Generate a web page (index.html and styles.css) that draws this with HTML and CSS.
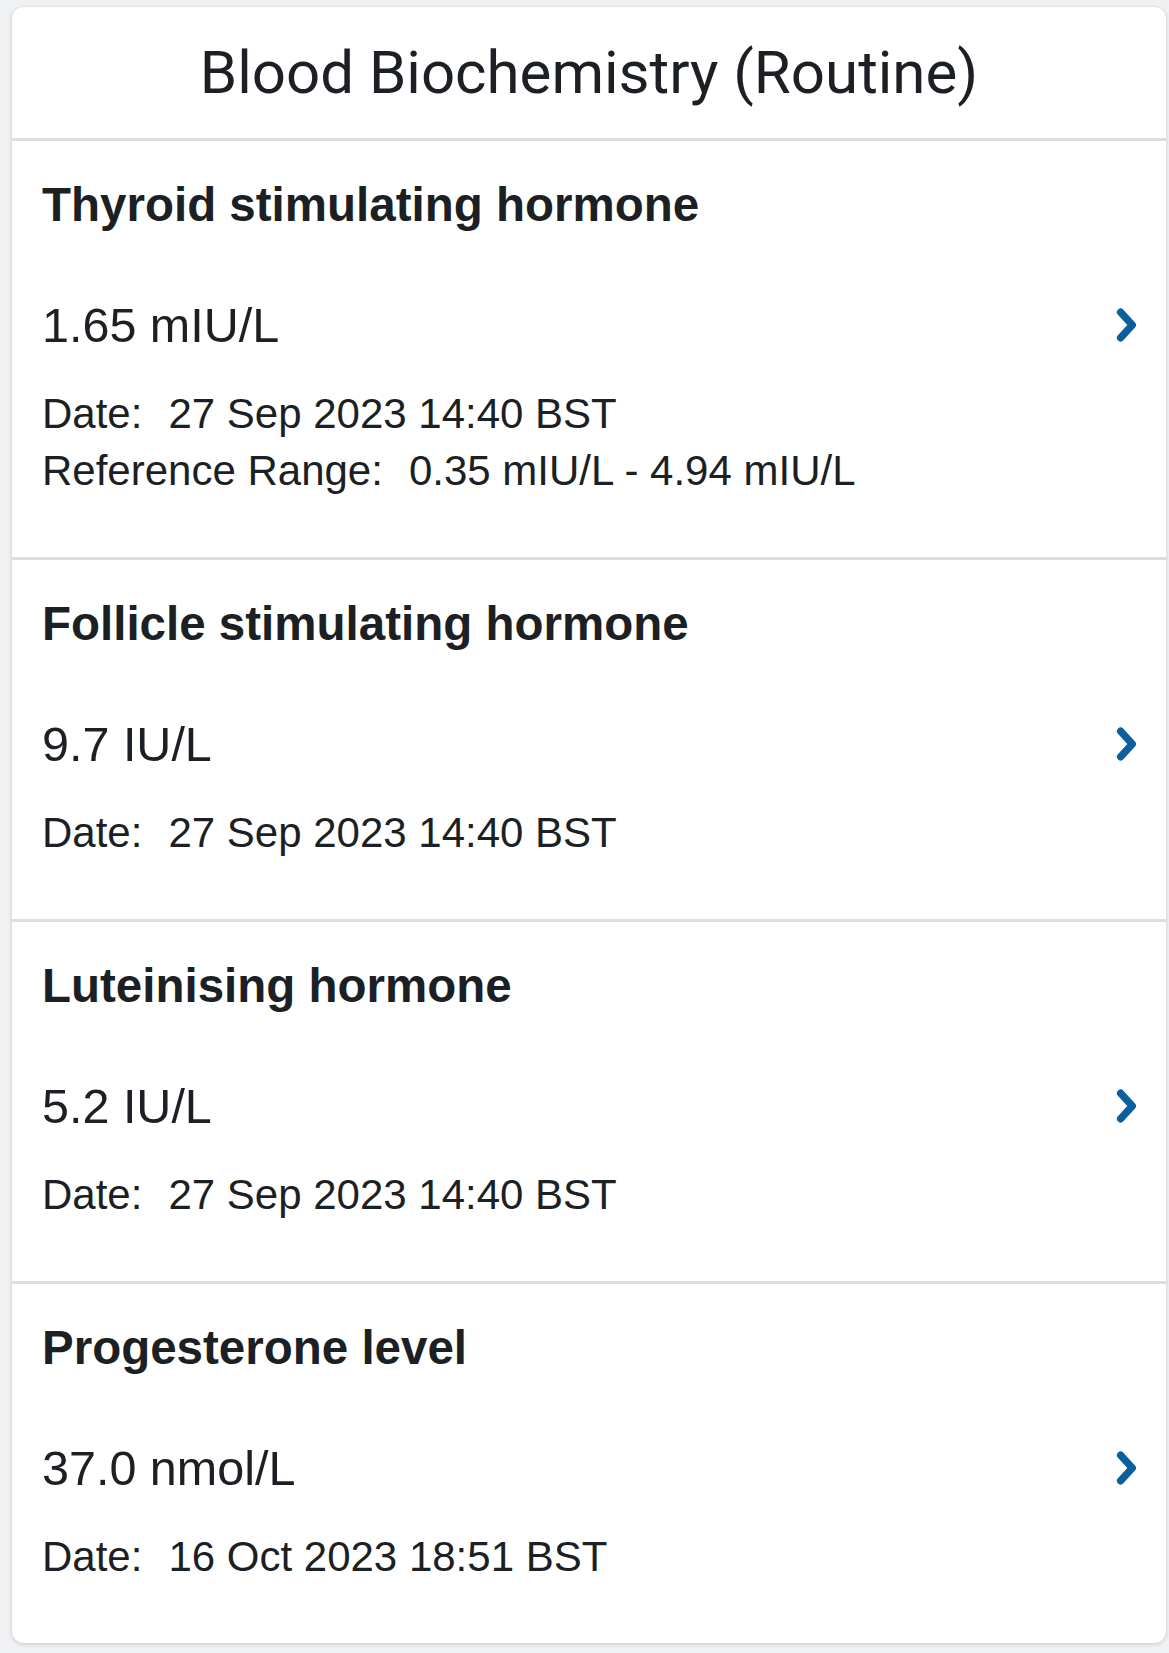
FILE: index.html
```html
<!DOCTYPE html>
<html lang="en">
<head>
  <meta charset="UTF-8">
  <meta name="viewport" content="width=device-width, initial-scale=1.0">
  <title>Blood Biochemistry (Routine)</title>
  <link rel="stylesheet" href="styles.css">
</head>
<body>
  <div class="card">
    <div class="card-header">Blood Biochemistry (Routine)</div>

    <div class="result">
      <div class="result-name">Thyroid stimulating hormone</div>
      <div class="result-value">
        <span>1.65 mIU/L</span>
        <svg class="chevron" viewBox="0 0 22 34"><path d="M5 5 L16 17 L5 29"/></svg>
      </div>
      <div class="result-meta">
        <div><span class="label">Date:</span>27 Sep 2023 14:40 BST</div>
        <div><span class="label">Reference Range:</span>0.35 mIU/L - 4.94 mIU/L</div>
      </div>
    </div>

    <div class="result">
      <div class="result-name">Follicle stimulating hormone</div>
      <div class="result-value">
        <span>9.7 IU/L</span>
        <svg class="chevron" viewBox="0 0 22 34"><path d="M5 5 L16 17 L5 29"/></svg>
      </div>
      <div class="result-meta">
        <div><span class="label">Date:</span>27 Sep 2023 14:40 BST</div>
      </div>
    </div>

    <div class="result">
      <div class="result-name">Luteinising hormone</div>
      <div class="result-value">
        <span>5.2 IU/L</span>
        <svg class="chevron" viewBox="0 0 22 34"><path d="M5 5 L16 17 L5 29"/></svg>
      </div>
      <div class="result-meta">
        <div><span class="label">Date:</span>27 Sep 2023 14:40 BST</div>
      </div>
    </div>

    <div class="result">
      <div class="result-name">Progesterone level</div>
      <div class="result-value">
        <span>37.0 nmol/L</span>
        <svg class="chevron" viewBox="0 0 22 34"><path d="M5 5 L16 17 L5 29"/></svg>
      </div>
      <div class="result-meta">
        <div><span class="label">Date:</span>16 Oct 2023 18:51 BST</div>
      </div>
    </div>
  </div>
</body>
</html>
```

FILE: styles.css
```css
html, body {
  margin: 0;
  background: #f0f1f3;
}
body {
  padding: 7px 3px 8px 12px;
  font-family: "Liberation Sans", Arial, sans-serif;
  color: #1c1f23;
}
.card {
  background: #fff;
  border-radius: 12px;
  box-shadow: 0 1px 4px rgba(0, 0, 0, 0.18);
  overflow: hidden;
}
.card-header {
  font-family: Roboto, "Liberation Sans", sans-serif;
  font-size: 60px;
  line-height: 131px;
  text-align: center;
  border-bottom: 3px solid #dcdee1;
}
.result {
  padding: 36px 32px 58px 30px;
  border-bottom: 3px solid #dcdee1;
}
.result:last-child {
  border-bottom: none;
}
.result-name {
  font-size: 47.5px;
  font-weight: bold;
  line-height: 56px;
}
.result-value {
  display: flex;
  align-items: center;
  justify-content: space-between;
  margin-top: 64px;
  font-size: 48.5px;
  line-height: 56px;
}
.chevron {
  width: 24px;
  height: 36px;
  margin-right: -5px;
}
.chevron path {
  fill: none;
  stroke: #0b5f9c;
  stroke-width: 7;
  stroke-linecap: round;
  stroke-linejoin: round;
}
.result-meta {
  margin-top: 32px;
  font-size: 42px;
  line-height: 57px;
}
.label {
  margin-right: 26px;
}
```
